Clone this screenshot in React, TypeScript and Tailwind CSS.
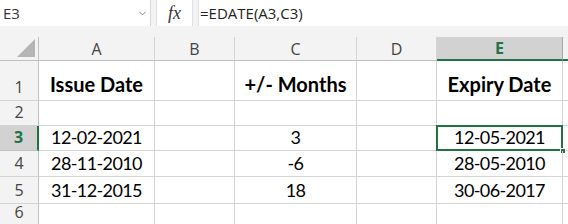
import React from 'react';
import { ChevronDown } from 'lucide-react';

const GRID = '#d4d4d4';
const GREEN = '#217346';

const cols = ['A', 'B', 'C', 'D', 'E'];
const colWidths = [116, 80, 122, 80, 126];
const rowHeights = [40, 25, 25, 26, 27, 22];

const cells: Record<string, { text: string; bold?: boolean }> = {
  A1: { text: 'Issue Date', bold: true },
  C1: { text: '+/- Months', bold: true },
  E1: { text: 'Expiry Date', bold: true },
  A3: { text: '12-02-2021' },
  C3: { text: '3' },
  E3: { text: '12-05-2021' },
  A4: { text: '28-11-2010' },
  C4: { text: '-6' },
  E4: { text: '28-05-2010' },
  A5: { text: '31-12-2015' },
  C5: { text: '18' },
  E5: { text: '30-06-2017' },
};

const uiFont = { fontFamily: '"Open Sans", "Noto Sans", sans-serif' };
const cellFont = { fontFamily: 'Lato, "Liberation Sans", sans-serif' };

export default function App() {
  return (
    <div className="w-[568px] h-[224px] overflow-hidden bg-white text-black flex flex-col">
      {/* Formula bar */}
      <div className="h-[26px] flex bg-[#f3f3f3] shrink-0" style={uiFont}>
        <div className="w-[151px] bg-white border-r border-[#d6d6d6] flex items-center pl-[3px] pr-[2px]">
          <span className="flex-1 text-[15px] text-[#333]">E3</span>
          <ChevronDown className="w-[11px] h-[11px] text-[#555]" strokeWidth={1.5} />
        </div>
        <div className="w-[5px]" />
        <div className="w-[37px] bg-white border-x border-[#e0e0e0] flex items-center justify-center">
          <span className="italic text-[18px] text-[#333]" style={{ fontFamily: '"Liberation Serif", serif' }}>
            fx
          </span>
        </div>
        <div className="w-[5px]" />
        <div className="flex-1 bg-white border-l border-[#e0e0e0] flex items-center pl-[1px]">
          <span className="text-[15px] text-[#222]">=EDATE(A3,C3)</span>
        </div>
      </div>

      <div className="h-[11px] bg-[#f3f3f3] shrink-0" />

      {/* Column headers */}
      <div className="flex h-[24px] shrink-0 bg-[#f3f3f3]" style={uiFont}>
        <div className="w-[39px] border-r border-b border-[#bfbfbf] relative">
          <div
            className="absolute right-[3px] bottom-[3px] w-[18px] h-[18px] bg-[#b5b5b5]"
            style={{ clipPath: 'polygon(100% 0, 100% 100%, 0 100%)' }}
          />
        </div>
        {cols.map((c, i) =>
          c === 'E' ? (
            <div
              key={c}
              style={{ width: colWidths[i] }}
              className="bg-[#d2d2d2] border-r border-[#a6a6a6] border-b-2 border-b-[#217346] flex items-center justify-center text-[16px] font-bold text-[#217346]"
            >
              {c}
            </div>
          ) : (
            <div
              key={c}
              style={{ width: colWidths[i] }}
              className="border-r border-[#d4d4d4] border-b border-b-[#bfbfbf] flex items-center justify-center text-[16px] text-[#444]"
            >
              {c}
            </div>
          )
        )}
        <div className="flex-1 border-b-2 border-b-[#217346] w-[5px]" />
      </div>

      {/* Rows */}
      {rowHeights.map((h, r) => {
        const row = r + 1;
        const active = row === 3;
        return (
          <div key={row} className="flex shrink-0" style={{ height: h }}>
            <div
              className={
                active
                  ? 'w-[39px] bg-[#d2d2d2] border-b border-[#bfbfbf] border-r-2 border-r-[#217346] flex items-end justify-center pb-[1px] text-[16px] font-bold text-[#217346]'
                  : 'w-[39px] bg-[#f3f3f3] border-b border-[#d4d4d4] border-r border-r-[#bfbfbf] flex items-end justify-center pb-[1px] text-[16px] text-[#444]'
              }
              style={uiFont}
            >
              {row}
            </div>
            {cols.map((c, i) => {
              const id = `${c}${row}`;
              const cell = cells[id];
              const selected = id === 'E3';
              return (
                <div
                  key={id}
                  style={{ width: colWidths[i], borderColor: GRID, ...cellFont }}
                  className="relative border-r border-b flex items-end justify-center pb-[2px]"
                >
                  {cell && (
                    <span
                      className={
                        cell.bold
                          ? 'text-[20px] font-bold leading-none mb-[4px]'
                          : 'text-[18px] tracking-[-0.6px] leading-none mb-[2px]'
                      }
                    >
                      {cell.text}
                    </span>
                  )}
                  {selected && (
                    <>
                      <div
                        className="absolute -left-[1px] -top-[1px] -right-[1px] -bottom-[1px] border-2"
                        style={{ borderColor: GREEN }}
                      />
                      <div
                        className="absolute -right-[4px] -bottom-[4px] w-[6px] h-[6px] border border-white"
                        style={{ backgroundColor: GREEN }}
                      />
                    </>
                  )}
                </div>
              );
            })}
            <div className="flex-1 border-b border-[#d4d4d4]" />
          </div>
        );
      })}
    </div>
  );
}
